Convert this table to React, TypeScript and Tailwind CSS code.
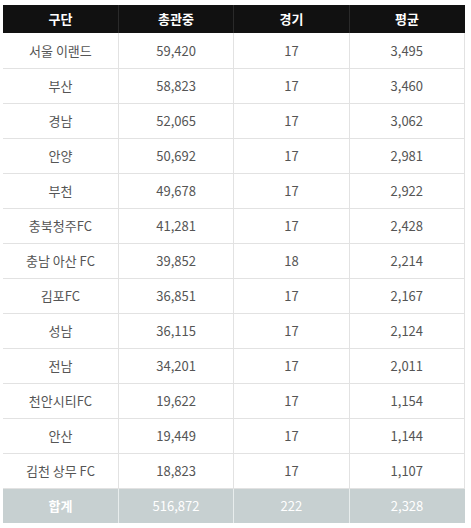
const rows: [string, string, string, string][] = [
  ["서울 이랜드", "59,420", "17", "3,495"],
  ["부산", "58,823", "17", "3,460"],
  ["경남", "52,065", "17", "3,062"],
  ["안양", "50,692", "17", "2,981"],
  ["부천", "49,678", "17", "2,922"],
  ["충북청주FC", "41,281", "17", "2,428"],
  ["충남 아산 FC", "39,852", "18", "2,214"],
  ["김포FC", "36,851", "17", "2,167"],
  ["성남", "36,115", "17", "2,124"],
  ["전남", "34,201", "17", "2,011"],
  ["천안시티FC", "19,622", "17", "1,154"],
  ["안산", "19,449", "17", "1,144"],
  ["김천 상무 FC", "18,823", "17", "1,107"],
];

const headers = ["구단", "총관중", "경기", "평균"];

export default function App() {
  return (
    <div className="h-[528px] w-[471px] bg-white pl-[3px] pt-[5px] font-['Noto_Sans_CJK_KR','Noto_Sans',sans-serif] text-[13px]">
      <table className="w-[462px] table-fixed border-collapse text-center">
        <thead>
          <tr className="h-[28px] bg-[#111111] text-white">
            {headers.map((h, i) => (
              <th key={h} className={`font-bold ${i < 3 ? "border-r border-[#2a2a2a]" : ""}`}>
                {h}
              </th>
            ))}
          </tr>
        </thead>
        <tbody className="text-[#555555]">
          {rows.map((r) => (
            <tr key={r[0]} className="h-[35px] border-b border-[#e2e2e2]">
              {r.map((c, i) => (
                <td key={i} className={i < 3 ? "border-r border-[#e2e2e2]" : "border-r border-[#e2e2e2]"}>
                  {c}
                </td>
              ))}
            </tr>
          ))}
          <tr className="h-[35px] bg-[#c7d0d1] text-white">
            <td className="border-r border-[#e8eded] font-bold">합계</td>
            <td className="border-r border-[#e8eded]">516,872</td>
            <td className="border-r border-[#e8eded]">222</td>
            <td>2,328</td>
          </tr>
        </tbody>
      </table>
    </div>
  );
}
